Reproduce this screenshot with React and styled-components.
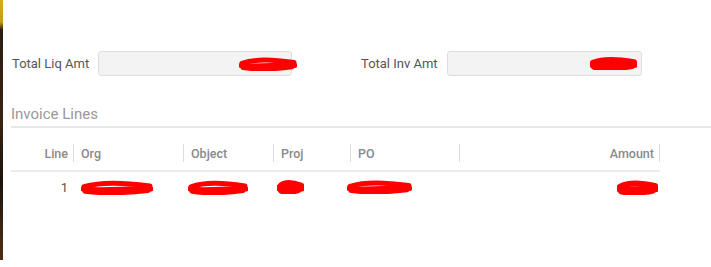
import React from 'react';
import styled, { createGlobalStyle } from 'styled-components';

const GlobalStyle = createGlobalStyle`
  html, body {
    margin: 0;
    padding: 0;
    background: #ffffff;
  }
  body {
    font-family: Roboto, "Liberation Sans", sans-serif;
  }
`;

const Page = styled.div`
  display: flex;
  width: 711px;
  height: 267px;
  background: #ffffff;
  overflow: hidden;
`;

const EdgeStrip = styled.div`
  width: 3px;
  height: 260px;
  flex: none;
  background: linear-gradient(
    to bottom,
    #d9a91c 0px,
    #c89a1e 22px,
    #2a1c12 30px,
    #3a2414 120px,
    #1c130c 180px,
    #4a2c16 250px,
    #4a2c16 260px
  );
`;

const Content = styled.div`
  flex: 1;
  display: flex;
  flex-direction: column;
  padding: 51px 0 0 8px;
`;

const TotalsRow = styled.div`
  display: flex;
  align-items: center;
  gap: 69px;
  padding-left: 1px;
`;

const Field = styled.div`
  display: flex;
  align-items: center;
`;

const Label = styled.span`
  width: 86px;
  font-size: 13px;
  color: #555555;
  white-space: nowrap;
`;

const AmountBox = styled.div`
  width: ${(p) => p.$width}px;
  height: 25px;
  box-sizing: border-box;
  background: #f3f3f3;
  border: 1px solid #dedede;
  border-radius: 3px;
  display: flex;
  align-items: center;
  justify-content: flex-end;
  padding-right: ${(p) => p.$pad}px;
`;

const SectionTitle = styled.div`
  margin-top: 29px;
  padding-bottom: 3px;
  font-size: 15px;
  color: #999999;
  border-bottom: 2px solid #e8e8e8;
`;

const Table = styled.div`
  margin-top: 17px;
  width: 649px;
`;

const HeadRow = styled.div`
  display: grid;
  grid-template-columns: 63px 110px 90px 77px 109px 200px;
  height: 27px;
  box-sizing: border-box;
  padding-bottom: 8px;
  align-items: center;
  border-bottom: 2px solid #ebebeb;
`;

const HeadCell = styled.div`
  position: relative;
  font-size: 12.5px;
  font-weight: 500;
  color: #8a8a8a;
  text-align: ${(p) => (p.$right ? 'right' : 'left')};
  padding: ${(p) => (p.$right ? '0 6px 0 0' : '0 0 0 7px')};

  &::after {
    content: '';
    position: absolute;
    right: 0;
    top: -2px;
    width: 1px;
    height: 18px;
    background: #dcdcdc;
  }
`;

const BodyRow = styled.div`
  display: grid;
  grid-template-columns: 63px 110px 90px 77px 109px 200px;
  height: 30px;
  align-items: center;
`;

const BodyCell = styled.div`
  display: flex;
  justify-content: ${(p) => (p.$right ? 'flex-end' : 'flex-start')};
  align-items: center;
  font-size: 13px;
  color: #555555;
  padding: ${(p) => p.$pad || '0'};
`;

const Scribble = ({ w, h = 14, variant = 0 }) => {
  const paths = [
    `M3 ${h * 0.45} C ${w * 0.3} ${h * 0.1}, ${w * 0.6} ${h * 0.2}, ${w - 3} ${h * 0.4}`,
    `M2 ${h * 0.6} C ${w * 0.35} ${h * 0.75}, ${w * 0.7} ${h * 0.5}, ${w - 2} ${h * 0.6}`,
    `M4 ${h * 0.75} C ${w * 0.3} ${h * 0.9}, ${w * 0.65} ${h * 0.85}, ${w - 5} ${h * 0.7}`,
  ];
  return (
    <svg width={w} height={h} viewBox={`0 0 ${w} ${h}`} style={{ display: 'block' }}>
      {paths.map((d, i) => (
        <path
          key={i}
          d={d}
          fill="none"
          stroke="#ff0000"
          strokeWidth={variant === 1 ? 6 : 5}
          strokeLinecap="round"
        />
      ))}
    </svg>
  );
};

const columns = [
  { key: 'line', title: 'Line', right: true },
  { key: 'org', title: 'Org' },
  { key: 'object', title: 'Object' },
  { key: 'proj', title: 'Proj' },
  { key: 'po', title: 'PO' },
  { key: 'amount', title: 'Amount', right: true },
];

export default function App() {
  return (
    <>
      <GlobalStyle />
      <Page>
        <EdgeStrip />
        <Content>
          <TotalsRow>
            <Field>
              <Label>Total Liq Amt</Label>
              <AmountBox $width={194} $pad={0}>
                <div style={{ marginRight: -6 }}>
                  <Scribble w={58} h={14} />
                </div>
              </AmountBox>
            </Field>
            <Field>
              <Label>Total Inv Amt</Label>
              <AmountBox $width={195} $pad={4}>
                <Scribble w={47} h={13} variant={1} />
              </AmountBox>
            </Field>
          </TotalsRow>

          <SectionTitle>Invoice Lines</SectionTitle>

          <Table>
            <HeadRow>
              {columns.map((c) => (
                <HeadCell key={c.key} $right={c.right}>
                  {c.title}
                </HeadCell>
              ))}
            </HeadRow>
            <BodyRow>
              <BodyCell $right $pad="0 6px 0 0">1</BodyCell>
              <BodyCell $pad="0 0 0 7px">
                <Scribble w={72} h={15} />
              </BodyCell>
              <BodyCell $pad="0 0 0 4px">
                <Scribble w={60} h={15} />
              </BodyCell>
              <BodyCell $pad="0 0 0 3px">
                <Scribble w={27} h={14} variant={1} />
              </BodyCell>
              <BodyCell $pad="0 0 0 0">
                <div style={{ marginLeft: -4 }}>
                  <Scribble w={65} h={14} />
                </div>
              </BodyCell>
              <BodyCell $right $pad="0 2px 0 0">
                <Scribble w={41} h={15} variant={1} />
              </BodyCell>
            </BodyRow>
          </Table>
        </Content>
      </Page>
    </>
  );
}
